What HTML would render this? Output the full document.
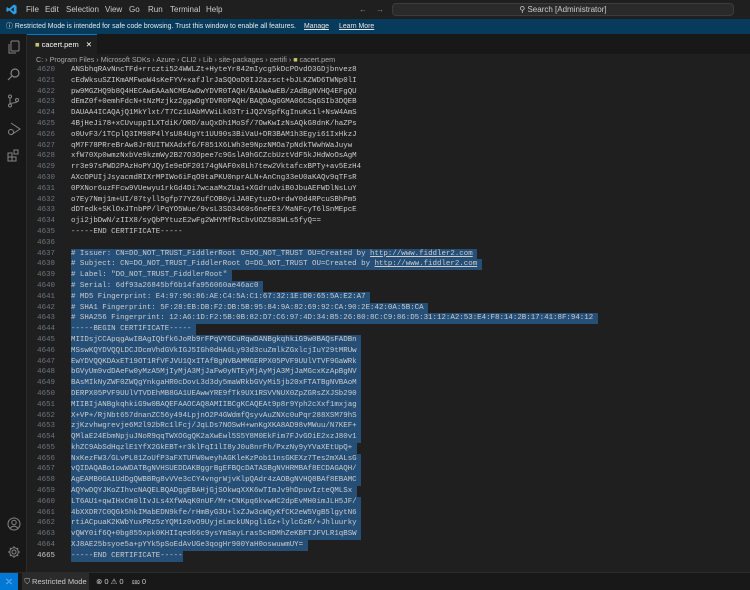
<!DOCTYPE html>
<html><head><meta charset="utf-8"><style>
*{margin:0;padding:0;box-sizing:border-box}
body{width:750px;height:590px;background:#1f1f1f;overflow:hidden;font-family:"Liberation Sans",sans-serif;color:#ccc;position:relative}
.title{position:absolute;top:0;left:0;width:750px;height:19px;background:#1f1f1f;font-size:8px;color:#ccc}
.title span{position:absolute;top:5px}
.search{position:absolute;left:392px;top:3px;width:342px;height:13px;border:1px solid #3c3c3c;border-radius:4px;background:#2a2a2a;font-size:8px;text-align:center;line-height:11px;color:#ccc}
.banner{position:absolute;top:19px;left:0;width:750px;height:15px;background:#063b5c;font-size:6.9px;color:#e8e8e8;line-height:15px}
.act{position:absolute;top:34px;left:0;width:27px;height:538px;background:#181818;border-right:1px solid #2b2b2b}
.tabs{position:absolute;top:34px;left:27px;width:723px;height:20px;background:#181818}
.tab{position:absolute;left:0;top:0;width:70px;height:20px;background:#1f1f1f;border-top:1px solid #0078d4;font-size:7.5px;line-height:19px;color:#fff}
.crumb{position:absolute;top:54px;left:27px;width:723px;height:12px;font-size:7.2px;color:#a9a9a9;line-height:12px;padding-left:9px}
.ed{position:absolute;top:65px;left:27px;width:723px;font-family:"Liberation Mono",monospace;font-size:7.45px;}
.l{height:10.8px;line-height:10.8px;white-space:pre;position:relative}
.n{position:absolute;left:0;width:28px;text-align:right;color:#6e7681}
.t{position:absolute;left:44px;color:#ccc}
.s .t{background:#264f78}
.cur .n{color:#ccc}
a{color:#ccc;text-decoration:underline}
.status{position:absolute;top:572px;left:0;width:750px;height:18px;background:#181818;border-top:1px solid #2b2b2b;font-size:7.5px;color:#ccc;line-height:17px}
.ic{position:absolute;left:7px}
</style></head><body>
<div class="title">
<svg style="position:absolute;left:6px;top:4px" width="11" height="11" viewBox="0 0 24 24"><path d="M17 1l6 3v16l-6 3-10-9-4 3-2-1V8l2-1 4 3 10-9zM17 7l-6 5 6 5z" fill="#2d9fe8"/></svg>
<span style="left:26px">File</span><span style="left:45px">Edit</span><span style="left:66px">Selection</span><span style="left:105px">View</span><span style="left:129px">Go</span><span style="left:148px">Run</span><span style="left:170px">Terminal</span><span style="left:206px">Help</span>
<span style="left:359px;color:#888">←</span><span style="left:376px;color:#888">→</span>
<div class="search">⚲ Search [Administrator]</div>
</div>
<div class="banner"><span style="margin-left:6px">ⓘ</span> <span>Restricted Mode is intended for safe code browsing. Trust this window to enable all features.</span><span style="position:absolute;left:304px;text-decoration:underline">Manage</span><span style="position:absolute;left:339px;text-decoration:underline">Learn More</span></div>
<div class="act">
<svg class="ic" style="top:6px" width="13" height="14" viewBox="0 0 13 14" fill="none" stroke="#858585"><rect x="4" y="1" width="8" height="10" rx="1"/><path d="M2 4v9h7"/></svg>
<svg class="ic" style="top:34px" width="13" height="13" viewBox="0 0 13 13" fill="none" stroke="#858585" stroke-width="1.2"><circle cx="8" cy="5" r="4"/><path d="M5 8l-4 4"/></svg>
<svg class="ic" style="top:60px" width="13" height="14" viewBox="0 0 13 14" fill="none" stroke="#858585"><circle cx="3" cy="2.5" r="1.5"/><circle cx="3" cy="11.5" r="1.5"/><circle cx="10" cy="6" r="1.5"/><path d="M3 4v6M10 7.5c0 2-7 1-7 2.5"/></svg>
<svg class="ic" style="top:88px" width="14" height="14" viewBox="0 0 14 14" fill="none" stroke="#858585"><path d="M4 1l9 6-9 6"/><circle cx="4" cy="10" r="2.5"/></svg>
<svg class="ic" style="top:115px" width="13" height="13" viewBox="0 0 13 13" fill="none" stroke="#858585"><rect x="1" y="4" width="4" height="4"/><rect x="1" y="8" width="4" height="4"/><rect x="5" y="8" width="4" height="4"/><rect x="7" y="1" width="4" height="4"/></svg>
<svg class="ic" style="top:483px" width="14" height="14" viewBox="0 0 14 14" fill="none" stroke="#858585"><circle cx="7" cy="7" r="6"/><circle cx="7" cy="5.5" r="2.2"/><path d="M3 11.5c2-3 6-3 8 0"/></svg>
<svg class="ic" style="top:511px" width="14" height="14" viewBox="0 0 14 14" fill="none" stroke="#858585"><circle cx="7" cy="7" r="2"/><path d="M7 1v2M7 11v2M1 7h2M11 7h2M2.8 2.8l1.4 1.4M9.8 9.8l1.4 1.4M2.8 11.2l1.4-1.4M9.8 4.2l1.4-1.4"/><circle cx="7" cy="7" r="4.3"/></svg>
</div>
<div class="tabs"><div class="tab"><span style="color:#c3c36a;margin-left:8px">■</span> cacert.pem <span style="margin-left:5px">✕</span></div></div>
<div class="crumb">C: › Program Files › Microsoft SDKs › Azure › CLI2 › Lib › site-packages › certifi › <span style="color:#c3c36a">■</span> cacert.pem</div>
<div class="ed">
<div class="l"><span class="n">4620</span><span class="t">ANSbhqRAvNncTFd+rrczti524WWLZt+HyteYr842mIycg5kDcPOvdO3GDjbnvez8</span></div>
<div class="l"><span class="n">4621</span><span class="t">cEdWksuSZIKmAMFwoW4sKeFYV+xafJlrJaSQOoD0IJ2azsct+bJLKZWD6TWNp0lI</span></div>
<div class="l"><span class="n">4622</span><span class="t">pw9MGZHQ9b8Q4HECAwEAAaNCMEAwDwYDVR0TAQH/BAUwAwEB/zAdBgNVHQ4EFgQU</span></div>
<div class="l"><span class="n">4623</span><span class="t">dEmZ0f+0emhFdcN+tNzMzjkz2ggwDgYDVR0PAQH/BAQDAgGGMA0GCSqGSIb3DQEB</span></div>
<div class="l"><span class="n">4624</span><span class="t">DAUAA4ICAQAjQ1MkYlxt/T7Cz1UAbMVWiLkO3TriJQ2VSpfKgInuKs1l+NsW4AmS</span></div>
<div class="l"><span class="n">4625</span><span class="t">4BjHeJi78+xCUvuppILXTdiK/ORO/auQxDh1MoSf/7OwKwIzNsAQkG8dnK/haZPs</span></div>
<div class="l"><span class="n">4626</span><span class="t">o0UvF3/1TCplQ3IM98P4lYsU84UgYt1UU90s3BiVaU+DR3BAM1h3Egyi61IxHkzJ</span></div>
<div class="l"><span class="n">4627</span><span class="t">qM7F78PRreBrAw8JrRUITWXAdxfG/F851X6LWh3e9NpzNMOa7pNdkTWwhWaJuyw</span></div>
<div class="l"><span class="n">4628</span><span class="t">xfW70Xp0wmzNxbVe9kzmWy2B27O3Opee7c9GslA9hGCZcbUztVdF5kJHdWoOsAgM</span></div>
<div class="l"><span class="n">4629</span><span class="t">rr3e97sPWD2PAzHoPYJQyIe9eDF20174gNAF0x8Lh7tew2VktafcxBPTy+av5EzH4</span></div>
<div class="l"><span class="n">4630</span><span class="t">AXcOPUIjJsyacmdRIXrMPIWo6iFqO9taPKU0nprALN+AnCng33eU0aKAQv9qTFsR</span></div>
<div class="l"><span class="n">4631</span><span class="t">0PXNor6uzFFcw9VUewyu1rkGd4Di7wcaaMxZUa1+XGdrudviB0JbuAEFWDlNsLuY</span></div>
<div class="l"><span class="n">4632</span><span class="t">o7Ey7Nmj1m+UI/87tyll5gfp77YZ6ufCOB0yiJA8EytuzO+rdwY0d4RPcuSBhPm5</span></div>
<div class="l"><span class="n">4633</span><span class="t">dDTedk+SKlOxJTnbPP/lPqYO5Wue/9vsL3SD3460s6neFE3/MaNFcyT6lSnMEpcE</span></div>
<div class="l"><span class="n">4634</span><span class="t">oji2jbDwN/zIIX8/syQbPYtuzE2wFg2WHYMfRsCbvUOZ58SWLs5fyQ==</span></div>
<div class="l"><span class="n">4635</span><span class="t">-----END CERTIFICATE-----</span></div>
<div class="l"><span class="n">4636</span><span class="t"></span></div>
<div class="l s"><span class="n">4637</span><span class="t"># Issuer: CN=DO_NOT_TRUST_FiddlerRoot O=DO_NOT_TRUST OU=Created by <a>http://www.fiddler2.com</a> </span></div>
<div class="l s"><span class="n">4638</span><span class="t"># Subject: CN=DO_NOT_TRUST_FiddlerRoot O=DO_NOT_TRUST OU=Created by <a>http://www.fiddler2.com</a> </span></div>
<div class="l s"><span class="n">4639</span><span class="t"># Label: "DO_NOT_TRUST_FiddlerRoot" </span></div>
<div class="l s"><span class="n">4640</span><span class="t"># Serial: 6df93a26845bf6b14fa956060ae46ac0 </span></div>
<div class="l s"><span class="n">4641</span><span class="t"># MD5 Fingerprint: E4:97:96:86:AE:C4:5A:C1:67:32:1E:D0:65:5A:E2:A7 </span></div>
<div class="l s"><span class="n">4642</span><span class="t"># SHA1 Fingerprint: 5F:28:EB:DB:F2:DB:5B:95:84:9A:82:69:92:CA:90:2E:42:0A:5B:CA </span></div>
<div class="l s"><span class="n">4643</span><span class="t"># SHA256 Fingerprint: 12:A6:1D:F2:5B:0B:82:D7:C6:97:4D:34:B5:26:80:8C:C9:86:D5:31:12:A2:53:E4:F8:14:2B:17:41:8F:94:12 </span></div>
<div class="l s"><span class="n">4644</span><span class="t">-----BEGIN CERTIFICATE----- </span></div>
<div class="l s"><span class="n">4645</span><span class="t">MIIDsjCCApqgAwIBAgIQbfk6JoRb9rFPqVYGCuRqwDANBgkqhkiG9w0BAQsFADBn </span></div>
<div class="l s"><span class="n">4646</span><span class="t">MSswKQYDVQQLDCJDcmVhdGVkIGJ5IGh0dHA6Ly93d3cuZmlkZGxlcjIuY29tMRUw </span></div>
<div class="l s"><span class="n">4647</span><span class="t">EwYDVQQKDAxET19OT1RfVFJVU1QxITAfBgNVBAMMGERPX05PVF9UUlVTVF9GaWRk </span></div>
<div class="l s"><span class="n">4648</span><span class="t">bGVyUm9vdDAeFw0yMzA5MjIyMjA3MjJaFw0yNTEyMjAyMjA3MjJaMGcxKzApBgNV </span></div>
<div class="l s"><span class="n">4649</span><span class="t">BAsMIkNyZWF0ZWQgYnkgaHR0cDovL3d3dy5maWRkbGVyMi5jb20xFTATBgNVBAoM </span></div>
<div class="l s"><span class="n">4650</span><span class="t">DERPX05PVF9UUlVTVDEhMB8GA1UEAwwYRE9fTk9UX1RSVVNUX0ZpZGRsZXJSb290 </span></div>
<div class="l s"><span class="n">4651</span><span class="t">MIIBIjANBgkqhkiG9w0BAQEFAAOCAQ8AMIIBCgKCAQEAt9p8r9Yph2cXxf1mxjag </span></div>
<div class="l s"><span class="n">4652</span><span class="t">X+VP+/RjNbt657dnanZC56y494LpjnO2P4GWdmfQsyvAuZNXc0uPqr288XSM79hS </span></div>
<div class="l s"><span class="n">4653</span><span class="t">zjKzvhwgrevje6M2l92bRc1lFcj/JqLDs7NOSwH+wnKgXKA8AD98vMWuu/N7KEF+ </span></div>
<div class="l s"><span class="n">4654</span><span class="t">QMlaE24EbmNpjuJNoR9qqTWXOGgQK2aXwEwl5S5Y8M0EkFim7FJvGOiE2xzJ80v1 </span></div>
<div class="l s"><span class="n">4655</span><span class="t">khZC9AbSdHqzlE1YfX2GkEBT+r3klFqI1lI8yJ0u8nrFh/PxzNy9yYVaXEtUpQ+ </span></div>
<div class="l s"><span class="n">4656</span><span class="t">NxKezFW3/GLvPL81ZoUfP3aFXTUFW0weyhAGKleKzPob11nsGKEXz7Tes2mXALsG </span></div>
<div class="l s"><span class="n">4657</span><span class="t">vQIDAQABo1owWDATBgNVHSUEDDAKBggrBgEFBQcDATASBgNVHRMBAf8ECDAGAQH/ </span></div>
<div class="l s"><span class="n">4658</span><span class="t">AgEAMB0GA1UdDgQWBBRg8vVVe3cCY4vngrWjvKlpQAdr4zAOBgNVHQ8BAf8EBAMC </span></div>
<div class="l s"><span class="n">4659</span><span class="t">AQYwDQYJKoZIhvcNAQELBQADggEBAHjGjSOkwqXXK6wTImJv9hDpuvIzteQMLSx </span></div>
<div class="l s"><span class="n">4660</span><span class="t">LT6AU1+qwIHxCm0lIvJLs4XfWAqK0nUF/Mr+CNKpq6kvwHC2dpEvMH0imJLH5JF/ </span></div>
<div class="l s"><span class="n">4661</span><span class="t">4bXXDR7C0QGk5hkIMabEDN9kfe/rHmByG3U+lxZJw3cWQyKfCK2eW5VgB5lgytN6 </span></div>
<div class="l s"><span class="n">4662</span><span class="t">rtiACpuaK2KWbYuxPRz5zYQM1z0vO9UyjeLmckUNpgliGz+lylcGzR/+Jhluurky </span></div>
<div class="l s"><span class="n">4663</span><span class="t">vQWY0if6Q+0bg855xpk0KHIIqed66c9ysYmSayLras5cHDMhZeKBFTJFVLR1qBSW </span></div>
<div class="l s"><span class="n">4664</span><span class="t">XJ8AE25bsyoe5a+pYYk5pSoEdAvUGe3qogHr900YaH0oswuwmUY= </span></div>
<div class="l s cur"><span class="n">4665</span><span class="t">-----END CERTIFICATE-----</span></div>
</div>
<div class="status">
<div style="position:absolute;left:0;top:0;width:18px;height:17px;background:#0078d4;color:#fff;text-align:center">⤫</div>
<div style="position:absolute;left:22px;top:0;width:67px;height:17px;background:#2b2b2b;text-align:center">⛉ Restricted Mode</div>
<span style="position:absolute;left:96px">⊗ 0 ⚠ 0</span>
<span style="position:absolute;left:132px">⅏ 0</span>
</div>
</body></html>
